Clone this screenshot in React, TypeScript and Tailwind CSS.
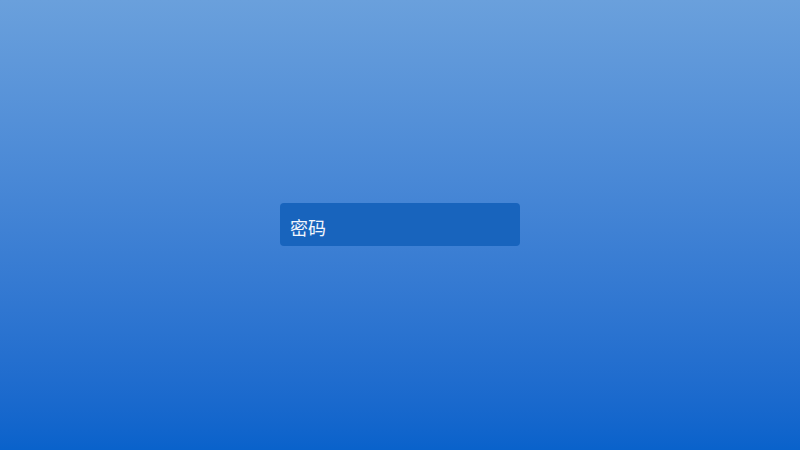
export default function App() {
  return (
    <div className="flex h-[450px] w-[800px] items-center justify-center bg-gradient-to-b from-[#6aa0dc] to-[#0962cb] font-['Noto_Sans','Noto_Sans_CJK_SC',sans-serif]">
      <input
        type="password"
        placeholder="密码"
        className="mb-[2px] h-[43px] w-[240px] rounded-[4px] bg-[#1864bd] px-[10px] pt-[8px] text-[18px] text-white outline-none placeholder:text-[#f2f6fc]"
      />
    </div>
  )
}
